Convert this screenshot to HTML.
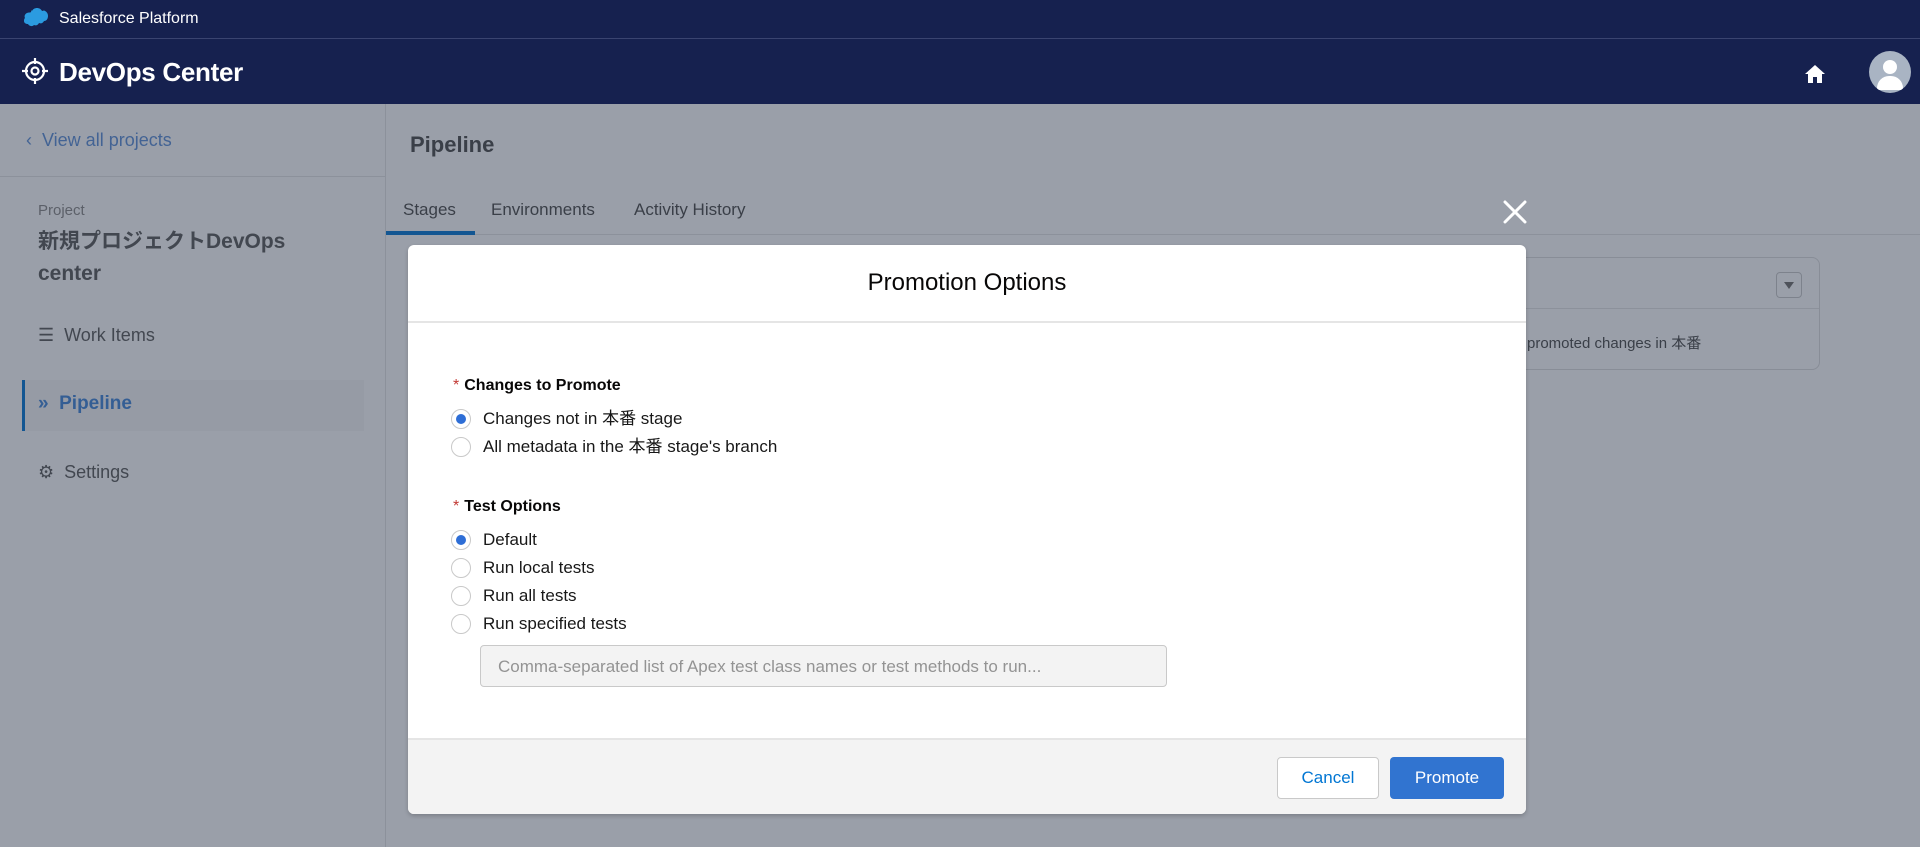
<!DOCTYPE html>
<html><head><meta charset="utf-8"><style>
*{box-sizing:border-box;margin:0;padding:0}
body{width:1920px;height:847px;overflow:hidden;font-family:"Liberation Sans","Noto Sans CJK JP",sans-serif;background:#fff;position:relative}
.abs{position:absolute}
.top{left:0;top:0;width:1920px;height:39px;background:#16214f;border-bottom:1px solid #3a4470}
.hdr{left:0;top:39px;width:1920px;height:65px;background:#16214f}
.side{left:0;top:104px;width:386px;height:743px;background:#fff;border-right:1px solid #e5e5e5}
.main{left:386px;top:104px;width:1534px;height:743px;background:#fff}
.ov{left:0;top:104px;width:1920px;height:743px;background:rgba(40,52,72,0.47)}
.t{white-space:nowrap}
.modal{left:408px;top:245px;width:1118px;height:569px;background:#fff;border-radius:6px;overflow:hidden;box-shadow:0 2px 4px rgba(0,0,0,.2)}
.radio{position:absolute;width:20px;height:20px;border:1px solid #c9c9c9;border-radius:50%;background:#fff}
.radio.on::after{content:"";position:absolute;left:4px;top:4px;width:10px;height:10px;border-radius:50%;background:#2e6ed6}
.rl{position:absolute;font-size:17px;color:#181818;line-height:20px}
.lab{position:absolute;font-size:16px;font-weight:bold;color:#080707;line-height:20px}
.lab b{color:#c23934;font-weight:normal;margin-right:5px}
</style></head><body>
<div class="abs top"></div>
<svg class="abs" style="left:21px;top:8px" width="27" height="19" viewBox="0 0 27 19"><path d="M11 3c1-2 3-3 5-3 2 0 4 1 5 3 1 0 2-1 3 0 2 1 3 3 3 5s-1 5-4 5c-1 2-3 3-5 2-1 2-3 3-5 2-2 2-5 1-6 -1-2 0-4-1-4-3 0-1 0-2 1-3-1-2 0-4 2-5 2-1 3 0 4-1 0 0 0-1 1-2z" fill="#2b9be0"/></svg>
<div class="abs t" style="left:59px;top:10px;font-size:16px;color:#fff">Salesforce Platform</div>
<div class="abs hdr"></div>
<svg class="abs" style="left:21px;top:57px" width="28" height="28" viewBox="0 0 28 28" fill="none" stroke="#fff" stroke-width="2.2"><circle cx="14" cy="14" r="9"/><circle cx="14" cy="14" r="3.5"/><path d="M14 1v6M14 21v6M1 14h6M21 14h6"/></svg>
<div class="abs t" style="left:59px;top:57px;font-size:26px;font-weight:bold;color:#fff;letter-spacing:-0.3px">DevOps Center</div>
<svg class="abs" style="left:1805px;top:65px" width="20" height="18" viewBox="0 0 20 18"><path d="M10 0L0 9h3v9h5v-6h4v6h5V9h3z" fill="#fff"/></svg>
<div class="abs" style="left:1869px;top:51px;width:42px;height:42px;border-radius:50%;background:#a9b4c3;overflow:hidden"><div class="abs" style="left:14px;top:9px;width:14px;height:14px;border-radius:50%;background:#fff"></div><div class="abs" style="left:8px;top:25px;width:26px;height:14px;border-radius:13px 13px 2px 2px;background:#fff"></div></div>

<div class="abs side">
 <div class="abs t" style="left:26px;top:26px;font-size:18px;color:#5b8fd8">‹&nbsp; View all projects</div>
 <div class="abs" style="left:0;top:72px;width:386px;height:1px;background:#e5e5e5"></div>
 <div class="abs t" style="left:38px;top:98px;font-size:15px;color:#8a8886">Project</div>
 <div class="abs" style="left:38px;top:122px;font-size:21px;font-weight:bold;color:#5a5a58;line-height:32px;width:300px">新規プロジェクトDevOps center</div>
 <div class="abs t" style="left:38px;top:221px;font-size:18px;color:#5a5a58">☰&nbsp;&nbsp;Work Items</div>
 <div class="abs" style="left:22px;top:276px;width:342px;height:51px;background:#f7f7f7;border-left:3px solid #0176d3"></div>
 <div class="abs t" style="left:38px;top:289px;font-size:19px;font-weight:bold;color:#3f84d8">»&nbsp;&nbsp;Pipeline</div>
 <div class="abs t" style="left:38px;top:358px;font-size:18px;color:#5a5a58">⚙&nbsp;&nbsp;Settings</div>
</div>
<div class="abs main">
 <div class="abs t" style="left:24px;top:28px;font-size:22px;font-weight:bold;color:#4a4a48">Pipeline</div>
 <div class="abs" style="left:0;top:130px;width:1534px;height:1px;background:#e5e5e5"></div>
 <div class="abs t" style="left:17px;top:96px;font-size:17px;color:#4a4a48">Stages</div>
 <div class="abs" style="left:0;top:127px;width:89px;height:4px;background:#0176d3"></div>
 <div class="abs t" style="left:105px;top:96px;font-size:17px;color:#4a4a48">Environments</div>
 <div class="abs t" style="left:248px;top:96px;font-size:17px;color:#4a4a48">Activity History</div>
 <div class="abs" style="left:1100px;top:153px;width:334px;height:113px;border:1px solid #ddd;border-radius:8px;background:#fff">
  <div class="abs" style="left:0;top:50px;width:332px;height:1px;background:#e5e5e5"></div>
  <div class="abs" style="left:289px;top:14px;width:26px;height:26px;border:1px solid #c9c9c9;border-radius:4px"><div class="abs" style="left:7px;top:9px;width:0;height:0;border-left:5px solid transparent;border-right:5px solid transparent;border-top:7px solid #706e6b"></div></div>
  <div class="abs t" style="left:40px;top:74px;font-size:15px;color:#4a4a48">promoted changes in 本番</div>
 </div>
</div>
<div class="abs ov"></div>
<svg class="abs" style="left:1503px;top:200px" width="24" height="24" viewBox="0 0 24 24" stroke="#fff" stroke-width="3" stroke-linecap="round"><path d="M2 2L22 22M22 2L2 22"/></svg>
<div class="abs modal">
 <div class="abs t" style="left:0;top:24px;width:1118px;text-align:center;font-size:24px;color:#080707">Promotion Options</div>
 <div class="abs" style="left:0;top:76px;width:1118px;height:2px;background:#e5e5e5"></div>
 <div class="lab t" style="left:45px;top:131px"><b>*</b>Changes to Promote</div>
 <div class="radio on" style="left:43px;top:164px"></div><div class="rl t" style="left:75px;top:164px">Changes not in 本番 stage</div>
 <div class="radio" style="left:43px;top:192px"></div><div class="rl t" style="left:75px;top:192px">All metadata in the 本番 stage's branch</div>
 <div class="lab t" style="left:45px;top:252px"><b>*</b>Test Options</div>
 <div class="radio on" style="left:43px;top:285px"></div><div class="rl t" style="left:75px;top:285px">Default</div>
 <div class="radio" style="left:43px;top:313px"></div><div class="rl t" style="left:75px;top:313px">Run local tests</div>
 <div class="radio" style="left:43px;top:341px"></div><div class="rl t" style="left:75px;top:341px">Run all tests</div>
 <div class="radio" style="left:43px;top:369px"></div><div class="rl t" style="left:75px;top:369px">Run specified tests</div>
 <div class="abs" style="left:72px;top:400px;width:687px;height:42px;background:#f3f3f3;border:1px solid #c9c9c9;border-radius:4px"><div class="abs t" style="left:17px;top:11px;font-size:17px;color:#939393">Comma-separated list of Apex test class names or test methods to run...</div></div>
 <div class="abs" style="left:0;top:493px;width:1118px;height:76px;background:#f3f3f3;border-top:2px solid #e5e5e5">
  <div class="abs" style="left:869px;top:17px;width:102px;height:42px;background:#fff;border:1px solid #c9c9c9;border-radius:4px;text-align:center;line-height:40px;font-size:17px;color:#0176d3">Cancel</div>
  <div class="abs" style="left:982px;top:17px;width:114px;height:42px;background:#3174d0;border-radius:4px;text-align:center;line-height:42px;font-size:17px;color:#fff">Promote</div>
 </div>
</div>
</body></html>
